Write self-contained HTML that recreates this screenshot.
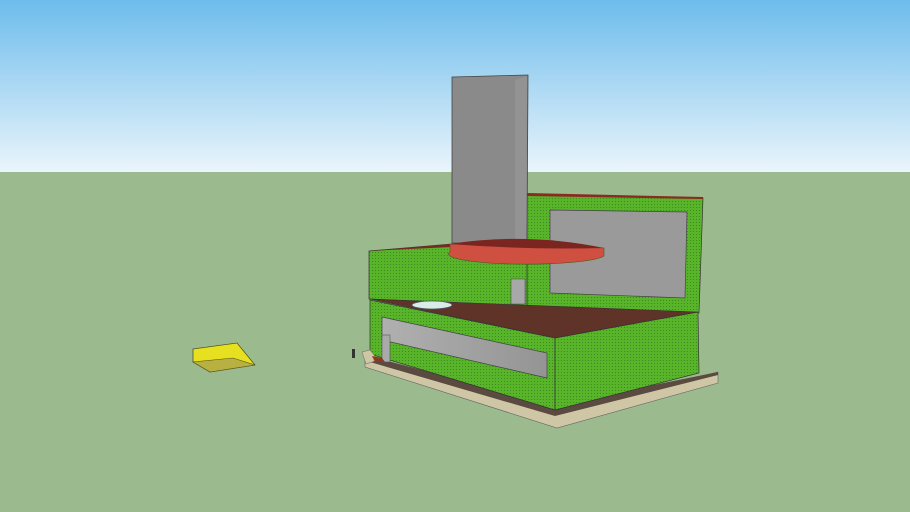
<!DOCTYPE html>
<html><head><style>
html,body{margin:0;padding:0;width:910px;height:512px;overflow:hidden}
</style></head><body>
<svg width="910" height="512" viewBox="0 0 910 512" xmlns="http://www.w3.org/2000/svg">
<defs>
<linearGradient id="sky" x1="0" y1="0" x2="0" y2="1">
<stop offset="0" stop-color="#6dbcec"/><stop offset="1" stop-color="#eaf5fb"/>
</linearGradient>
<pattern id="dots" width="3" height="3" patternUnits="userSpaceOnUse">
<rect width="3" height="3" fill="#58b52a"/><rect width="1" height="1" fill="#3f8a1e"/>
</pattern>
<linearGradient id="win" x1="0" y1="0" x2="1" y2="0">
<stop offset="0" stop-color="#b0b0b0"/><stop offset="1" stop-color="#949494"/>
</linearGradient>
</defs>
<rect width="910" height="172" fill="url(#sky)"/>
<rect y="172" width="910" height="340" fill="#9bbb8f"/>
<polygon points="193,349 237,343 255,365 210,372 193,362" fill="#e6e020" stroke="#55551a" stroke-width="0.8"/>
<polygon points="193,362 210,372 255,365 233,358" fill="#b8b040" stroke="#55551a" stroke-width="0.6"/>
<rect x="352" y="349" width="3" height="9" fill="#333"/>
<polygon points="365,355 555,412 718,372 718,383 557,428 365,367" fill="#cfc6a6" stroke="#666" stroke-width="0.6"/>
<polygon points="365,355 555,405 718,372 718,375 555,416 370,362" fill="#5a4a40"/>
<polygon points="527,195 703,198 699,313 527,307" fill="url(#dots)" stroke="#333" stroke-width="0.7"/>
<polygon points="527,193 703,197 703,199 527,196" fill="#8b2a20"/>
<polygon points="550,210 687,212 685,298 550,293" fill="#9a9a9a" stroke="#444" stroke-width="0.7"/>
<polygon points="369,251 452,244 527,243 527,307 369,299" fill="url(#dots)" stroke="#333" stroke-width="0.7"/>
<polygon points="369,251 452,244 452,247" fill="#7a2a22"/>
<rect x="511" y="279" width="14" height="25" fill="#a8a8a8" stroke="#555" stroke-width="0.6"/>
<polygon points="452,77 528,75 527,243 452,243" fill="#8a8a8a" stroke="#444" stroke-width="0.8"/>
<polygon points="515,80 527,76 526,242 515,242" fill="#999" opacity="0.6"/>
<path d="M450,244 L450,252 A77 10 0 0 0 604,256 L604,248 Z" fill="#cf5040" stroke="#552" stroke-width="0.6"/>
<path d="M450,244 Q527,232 604,248 Q527,250 450,244 Z" fill="#7a2520"/>
<polygon points="370,299 698,312 555,338" fill="#5f3328" stroke="#333" stroke-width="0.6"/>
<ellipse cx="432" cy="305" rx="20" ry="4" fill="#d8ece8" stroke="#556" stroke-width="0.8"/>
<polygon points="370,300 555,338 555,410 370,354" fill="url(#dots)" stroke="#333" stroke-width="0.7"/>
<polygon points="382,317 547,353 547,378 382,340" fill="url(#win)" stroke="#444" stroke-width="0.7"/>
<rect x="382" y="335" width="8" height="27" fill="#aaa" stroke="#555" stroke-width="0.6"/>
<polygon points="555,338 698,312 699,373 555,410" fill="url(#dots)" stroke="#333" stroke-width="0.7"/>
<polygon points="362,352 370,350 378,360 366,364" fill="#cfc6a6" stroke="#666" stroke-width="0.5"/>
<polygon points="372,356 382,358 385,362 375,362" fill="#8b3a20"/>
</svg>
</body></html>
